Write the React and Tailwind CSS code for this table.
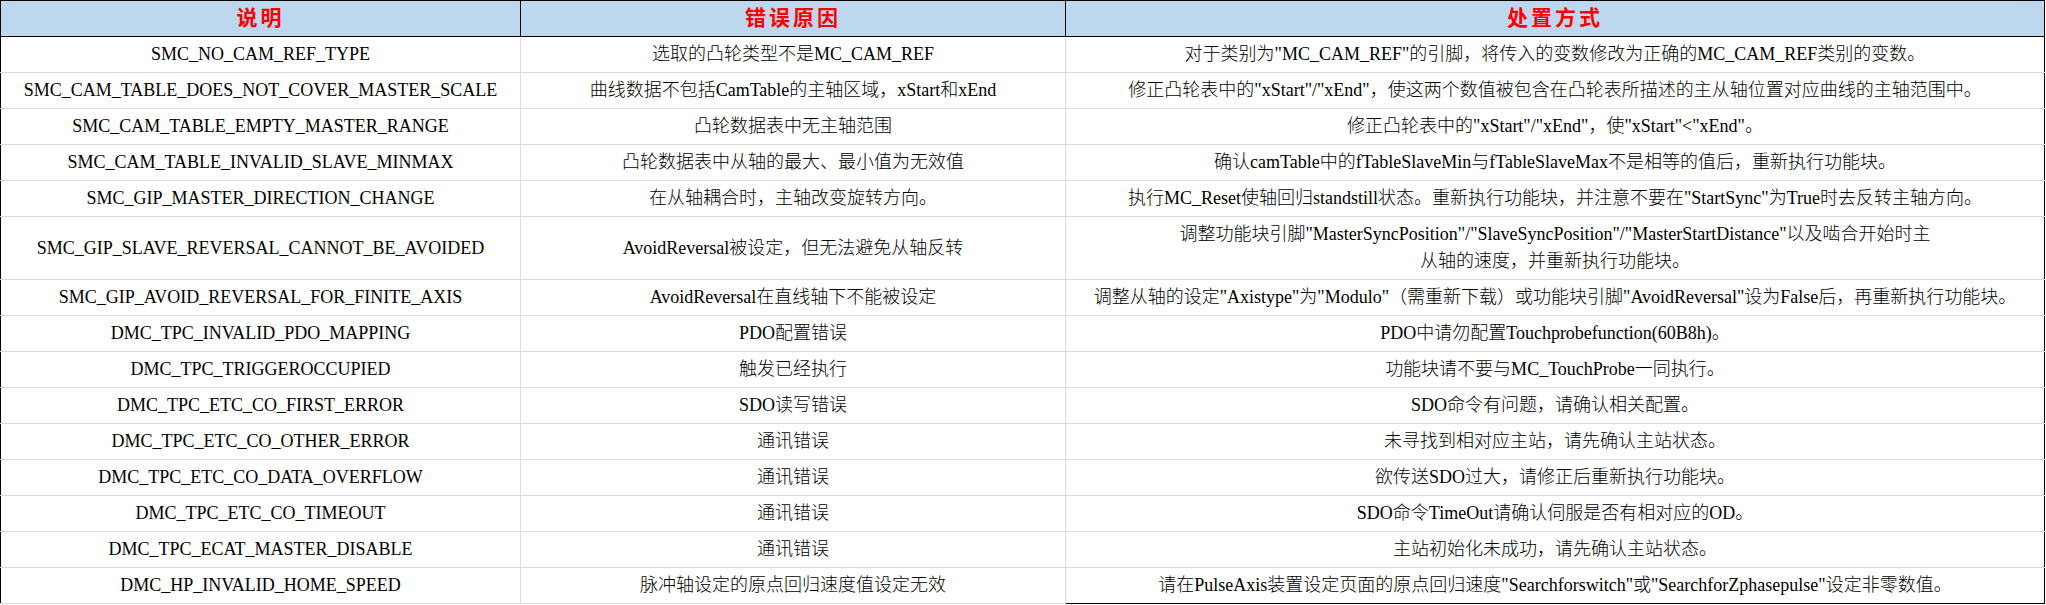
const rows = [
  ['SMC_NO_CAM_REF_TYPE', '选取的凸轮类型不是MC_CAM_REF', '对于类别为"MC_CAM_REF"的引脚，将传入的变数修改为正确的MC_CAM_REF类别的变数。'],
  ['SMC_CAM_TABLE_DOES_NOT_COVER_MASTER_SCALE', '曲线数据不包括CamTable的主轴区域，xStart和xEnd', '修正凸轮表中的"xStart"/"xEnd"，使这两个数值被包含在凸轮表所描述的主从轴位置对应曲线的主轴范围中。'],
  ['SMC_CAM_TABLE_EMPTY_MASTER_RANGE', '凸轮数据表中无主轴范围', '修正凸轮表中的"xStart"/"xEnd"，使"xStart"<"xEnd"。'],
  ['SMC_CAM_TABLE_INVALID_SLAVE_MINMAX', '凸轮数据表中从轴的最大、最小值为无效值', '确认camTable中的fTableSlaveMin与fTableSlaveMax不是相等的值后，重新执行功能块。'],
  ['SMC_GIP_MASTER_DIRECTION_CHANGE', '在从轴耦合时，主轴改变旋转方向。', '执行MC_Reset使轴回归standstill状态。重新执行功能块，并注意不要在"StartSync"为True时去反转主轴方向。'],
  ['SMC_GIP_SLAVE_REVERSAL_CANNOT_BE_AVOIDED', 'AvoidReversal被设定，但无法避免从轴反转', null],
  ['SMC_GIP_AVOID_REVERSAL_FOR_FINITE_AXIS', 'AvoidReversal在直线轴下不能被设定', '调整从轴的设定"Axistype"为"Modulo"（需重新下载）或功能块引脚"AvoidReversal"设为False后，再重新执行功能块。'],
  ['DMC_TPC_INVALID_PDO_MAPPING', 'PDO配置错误', 'PDO中请勿配置Touchprobefunction(60B8h)。'],
  ['DMC_TPC_TRIGGEROCCUPIED', '触发已经执行', '功能块请不要与MC_TouchProbe一同执行。'],
  ['DMC_TPC_ETC_CO_FIRST_ERROR', 'SDO读写错误', 'SDO命令有问题，请确认相关配置。'],
  ['DMC_TPC_ETC_CO_OTHER_ERROR', '通讯错误', '未寻找到相对应主站，请先确认主站状态。'],
  ['DMC_TPC_ETC_CO_DATA_OVERFLOW', '通讯错误', '欲传送SDO过大，请修正后重新执行功能块。'],
  ['DMC_TPC_ETC_CO_TIMEOUT', '通讯错误', 'SDO命令TimeOut请确认伺服是否有相对应的OD。'],
  ['DMC_TPC_ECAT_MASTER_DISABLE', '通讯错误', '主站初始化未成功，请先确认主站状态。'],
  ['DMC_HP_INVALID_HOME_SPEED', '脉冲轴设定的原点回归速度值设定无效', '请在PulseAxis装置设定页面的原点回归速度"Searchforswitch"或"SearchforZphasepulse"设定非零数值。'],
]

export default function App() {
  return (
    <div className="w-[2046px] h-[605px] bg-white font-['Liberation_Serif','Noto_Sans_CJK_SC',serif] text-[18px] text-black">
      <table className="w-[2045px] table-fixed border-collapse border border-black">
        <colgroup>
          <col className="w-[520px]" />
          <col className="w-[545px]" />
          <col />
        </colgroup>
        <thead>
          <tr className="h-[36px] bg-[#bdd7ee]">
            {['说明', '错误原因', '处置方式'].map((h) => (
              <th key={h} className="border border-black p-0 text-center align-middle text-[21px] font-bold text-[#ff0000] tracking-[3px]">
                {h}
              </th>
            ))}
          </tr>
        </thead>
        <tbody className="font-light">
          {rows.map(([a, b, c], i) => (
            <tr key={a} className={c ? 'h-[36px]' : 'h-[63px]'}>
              <td className="border border-[#dcdcdc] border-l-black p-0 text-center align-middle leading-tight">{a}</td>
              <td className="border border-[#dcdcdc] p-0 text-center align-middle leading-tight">{b}</td>
              <td className={`border border-[#dcdcdc] border-r-black p-0 text-center align-middle leading-[27px] ${i === rows.length - 1 ? 'border-b-black' : ''}`}>
                {c ?? (
                  <>
                    调整功能块引脚"MasterSyncPosition"/"SlaveSyncPosition"/"MasterStartDistance"以及啮合开始时主
                    <br />
                    从轴的速度，并重新执行功能块。
                  </>
                )}
              </td>
            </tr>
          ))}
        </tbody>
      </table>
    </div>
  )
}
